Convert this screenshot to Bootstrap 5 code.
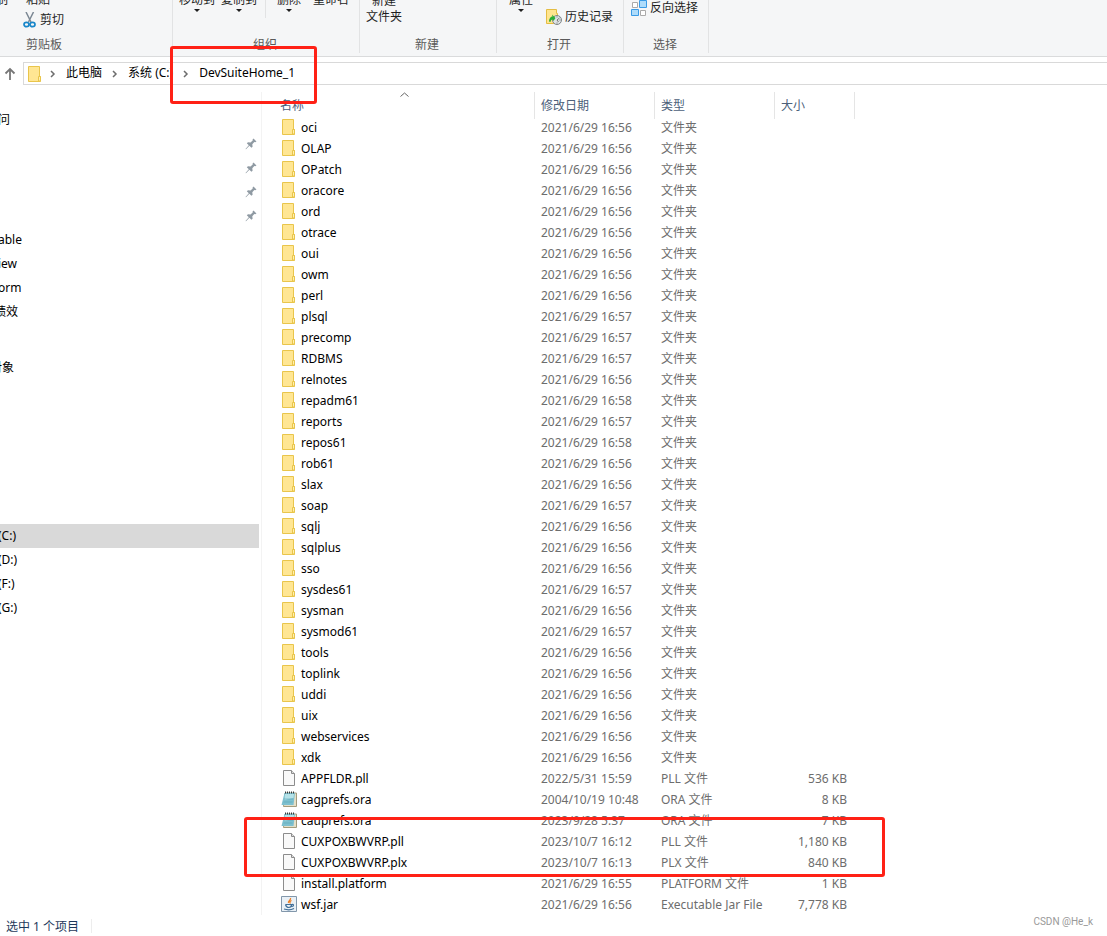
<!DOCTYPE html>
<html lang="zh-CN">
<head>
<meta charset="utf-8">
<meta name="viewport" content="width=device-width, initial-scale=1">
<title>DevSuiteHome_1</title>
<link href="https://cdn.jsdelivr.net/npm/bootstrap@5.3.0/dist/css/bootstrap.min.css" rel="stylesheet">
<style>
  body { font: 12px/16px "Noto Sans", "Noto Sans CJK SC", sans-serif; color: #000; background: #fff; overflow-x: hidden; }
  button { border: 0; background: none; padding: 0; color: #1e1e1e; white-space: nowrap; font: inherit; }
  svg { display: block; flex: none; }
  .ribbon { background: #f5f6f7; border-bottom: 1px solid #dadbdc; height: 57px; overflow: hidden; }
  .group { height: 53px; flex: none; border-right: 1px solid #e2e3e4; display: flex; flex-direction: column; justify-content: flex-end; }
  .group-body { display: flex; align-items: flex-end; height: 37px; padding-left: 6px; }
  .group-name { color: #5a5a5a; text-align: center; height: 16px; padding-right: 2px; }
  .g-clip { width: 173px; } .g-org { width: 187px; } .g-new { width: 137px; } .g-open { width: 127px; } .g-sel { width: 85px; }
  .g-clip .group-body { padding-left: 0; }
  .g-clip .group-name { padding-left: 26px; text-align: left; }
  .g-clip .plain { margin-left: -4px; }
  .clip-stack { margin: 0 0 9px 15px; gap: 4px; }
  .clip-stack > :first-child { margin-left: 3px; }
  .clip-stack span { padding-left: 3px; }
  .big { margin-bottom: 25px; }
  .big::after { content: ""; display: block; width: 6px; margin: 1px auto 0; border: 3px solid transparent; border-top-color: #1e1e1e; border-bottom: 0; }
  .plain { margin-bottom: 29px; }
  .g-org .group-body { gap: 6px; }
  .splitter { width: 1px; height: 18px; background: #e2e3e4; align-self: flex-start; margin: 0 5px 0 2px; }
  .g-org .plain { margin-left: 6px; }
  .low { margin-bottom: 12px; }
  .mid { margin-bottom: 21px; }
  .g-open .group-body { padding-left: 12px; gap: 13px; }
  .with-icon { display: flex; align-items: center; gap: 3px; }
  .up { width: 23px; padding-left: 4px; }
  .address { height: 35px; padding: 5px 0 7px; }
  .crumbs { border: 1px solid #d9d9d9; border-right: 0; padding-left: 4px; gap: 10px; }
  .crumbs > svg:first-child { margin-right: -4px; }
  .crumbs a, .tree a { color: #000; text-decoration: none; white-space: nowrap; }
  .crumbs a { margin-top: -2px; }
  .mark-box { position: absolute; border: 3px solid #ff2116; border-radius: 3px; pointer-events: none; z-index: 2; }
  .mark-path { left: 170px; top: -11px; width: 147px; height: 58px; }
  .mark-files { left: -18px; right: -30px; bottom: 38px; height: 60px; }
  .tree { width: 262px; flex: none; border-right: 1px solid #f3f3f3; padding-top: 16px; overflow: hidden; }
  .tree li { height: 24px; margin-right: 2px; padding-right: 2px; display: flex; align-items: center; }
  .tree .chosen { background: #d9d9d9; }
  .tree a { margin-left: -2px; }
  .tree .cut-half a { margin-left: -6px; }
  .tree .cut-most a { margin-left: -10px; }
  .files { width: 581px; table-layout: fixed; border-collapse: separate; border-spacing: 0; margin-left: 12px; }
  .files th { height: 25px; padding: 2px 6px 0; position: relative; font-weight: 400; color: #4c607a; vertical-align: middle; }
  .files th::after { content: ""; position: absolute; right: 0; top: 0; height: 27px; border-right: 1px solid #e5e5e5; }
  .files td { height: 21px; padding: 0 6px; color: #6d6d6d; white-space: nowrap; }
  .files td:first-child { padding-left: 7px; color: #000; }
  .files td:last-child { padding-right: 8px; text-align: right; }
  .entry { display: flex; gap: 4px; align-items: center; }
  .entry svg { margin-top: -2px; }
  .col-name { width: 261px; } .col-mid { width: 120px; } .col-size { width: 80px; }
  .sort { position: absolute; left: 126px; top: 0; }
  .status { color: #1e395b; padding: 4px 14px 0 6px; }
  .status-sep { width: 1px; height: 14px; background: #ededed; margin-left: 12px; }
  .credit { font: 10px/12px Roboto, sans-serif; color: #999; height: 16px; margin-top: -3px; }
</style>
</head>
<body>
<svg class="d-none">
  <symbol id="folder" viewBox="0 0 16 16"><path d="M1.500 .5h11v10h1v5h-12z" fill="#ffe693" stroke="#e9c54b"/><path d="M11.500 15v-4.500h2v4.500z" fill="#fff0b0" stroke="#e9c54b"/></symbol>
  <symbol id="page" viewBox="0 0 16 16"><path d="M2.500 .5h8l3 3v12h-11z" fill="#f9f9f9" stroke="#8c8c8c"/><path d="M10.500 .5v3h3" fill="#ddd" stroke="#8c8c8c"/></symbol>
  <symbol id="note" viewBox="0 0 16 16"><path d="M4 2h11.500v13.500h-13z" fill="#e4dfc8" stroke="#a39b7c"/><path d="M3.500 2h10.500l-1.500 12h-12z" fill="#7dc0cf"/><path d="M4 3h9l-.5 4-9 2z" fill="#b5e2e8"/><path d="M3 8h9M2.500 11h9" stroke="#5aa5b6" stroke-width=".6"/><path d="M4 1.500h10" stroke="#343d40" stroke-width="2" stroke-dasharray="1 1"/></symbol>
  <symbol id="jar" viewBox="0 0 16 16"><path d="M.5 .5h15v15H.5z" fill="#e9f0f6" stroke="#8297ab"/><path d="M9.500 2c1 2-3 3-2 5M10.500 4.500c-2 1-2 2-1 3" fill="none" stroke="#ed7d22" stroke-width="1.300"/><path d="M4.500 8.500h6c0 4-5 4-6 0M11 8.500c2-.5 2 2-.5 2M3 13c3 1 7 1 10-.5" fill="none" stroke="#416f98" stroke-width="1.200"/></symbol>
  <symbol id="pin" viewBox="0 0 12 12"><path d="M8.500 .5l3 3-1.300.7-.9-.1-2 2.200.3 2.500-1.200 1-2-2L1 11.300.5 11l3.300-3.800-2-1.900L3 4.200l2.500.3 2.200-2-.1-1z" fill="#8f9aa3"/></symbol>
  <symbol id="step" viewBox="0 0 6 8"><path d="M1 1l3 3-3 3" fill="none" stroke="#6d6d6d" stroke-width="1.500"/></symbol>
</svg>

<header class="ribbon d-flex">
  <section class="group g-clip">
    <div class="group-body">
      <button class="plain">制</button>
      <div class="clip-stack d-flex flex-column align-items-start">
        <button>粘贴</button>
        <button class="d-flex align-items-center">
          <svg width="14" height="16" viewBox="0 0 14 16"><path d="M3 0l5 10M10.500 0L5.500 10" stroke="#7b8894" stroke-width="1.500"/><ellipse cx="3.500" cy="12.500" rx="2.500" ry="2.200" fill="none" stroke="#1886c9" stroke-width="1.700"/><ellipse cx="9.500" cy="12.500" rx="2.500" ry="2.200" fill="none" stroke="#1886c9" stroke-width="1.700"/></svg>
          <span>剪切</span></button>
      </div>
    </div>
    <div class="group-name">剪贴板</div>
  </section>
  <section class="group g-org">
    <div class="group-body">
      <button class="big">移动到</button>
      <button class="big">复制到</button>
      <div class="splitter"></div>
      <button class="big">删除</button>
      <button class="plain">重命名</button>
    </div>
    <div class="group-name">组织</div>
  </section>
  <section class="group g-new">
    <div class="group-body">
      <button class="low">新建<br>文件夹</button>
    </div>
    <div class="group-name">新建</div>
  </section>
  <section class="group g-open">
    <div class="group-body">
      <button class="big">属性</button>
      <button class="low with-icon">
        <svg width="16" height="16" viewBox="0 0 16 16"><path d="M.5 .5h10v4h1v10H.5z" fill="#ffe58f" stroke="#e4bd43"/><circle cx="11" cy="11" r="4.500" fill="#dfe4e6" stroke="#7f8588"/><path d="M11 11l2.500-2M11 11l1.500 2M11 7.500v1M14.500 11h-1M11 14.500v-1" fill="none" stroke="#555" stroke-width=".8"/><path d="M3 12.500c0-3 1.500-5 3.500-5L6 5.500 9.500 9 7.500 12l-.8-1.500c-1.500 0-2 1-2.200 2.500z" fill="#2cae36"/></svg>
        <span>历史记录</span></button>
    </div>
    <div class="group-name">打开</div>
  </section>
  <section class="group g-sel">
    <div class="group-body">
      <button class="mid with-icon">
        <svg width="17" height="16" viewBox="0 0 17 16"><path d="M2.500 2.500h5v5h-5zM10.500 10.500h5v5h-5z" fill="#fff" stroke="#aaa"/><path d="M9.500 .5h7v7h-7zM1.500 9.500h7v6h-7z" fill="#aedcfb" stroke="#3a9be6"/></svg>
        <span>反向选择</span></button>
    </div>
    <div class="group-name">选择</div>
  </section>
</header>

<nav class="address d-flex position-relative" aria-label="路径">
  <button class="up d-flex align-items-center" aria-label="向上">
    <svg width="12" height="14" viewBox="0 0 12 14"><path d="M6 13V2M1.500 6.500L6 2l4.500 4.500" fill="none" stroke="#777" stroke-width="1.800"/></svg></button>
  <div class="crumbs d-flex align-items-center flex-grow-1">
    <svg width="16" height="16"><use href="#folder" x="-1"/></svg>
    <svg width="6" height="8"><use href="#step"/></svg>
    <a href="#">此电脑</a>
    <svg width="6" height="8"><use href="#step"/></svg>
    <a href="#">系统 (C:)</a>
    <svg width="6" height="8"><use href="#step"/></svg>
    <a href="#">DevSuiteHome_1</a>
  </div>
  <div class="mark-box mark-path"></div>
</nav>

<main class="d-flex">
  <ul class="tree list-unstyled mb-0">
    <li><a href="#">问</a></li>
    <li class="justify-content-end"><svg width="12" height="12"><use href="#pin"/></svg></li>
    <li class="justify-content-end"><svg width="12" height="12"><use href="#pin"/></svg></li>
    <li class="justify-content-end"><svg width="12" height="12"><use href="#pin"/></svg></li>
    <li class="justify-content-end"><svg width="12" height="12"><use href="#pin"/></svg></li>
    <li><a href="#">able</a></li>
    <li><a href="#">iew</a></li>
    <li><a href="#">orm</a></li>
    <li class="cut-half"><a href="#">绩效</a></li>
    <li class="mt-2"></li>
    <li class="cut-most"><a href="#">对象</a></li>
    <li></li><li></li><li></li><li></li><li></li><li></li>
    <li class="chosen"><a href="#">(C:)</a></li>
    <li><a href="#">(D:)</a></li>
    <li><a href="#">(F:)</a></li>
    <li><a href="#">(G:)</a></li>
  </ul>
  <div class="position-relative">
    <table class="files">
      <colgroup><col class="col-name"><col class="col-mid"><col class="col-mid"><col class="col-size"></colgroup>
      <thead><tr>
        <th>名称<svg class="sort" width="9" height="6" viewBox="0 0 9 6"><path d="M.5 4.500l4-3.500 4 3.500" fill="none" stroke="#666"/></svg></th>
        <th>修改日期</th><th>类型</th><th>大小</th>
      </tr></thead>
      <tbody id="rows"></tbody>
    </table>
    <div class="mark-box mark-files"></div>
  </div>
</main>

<footer class="status d-flex">
  <span>选中 1 个项目</span><span class="status-sep"></span>
  <span class="credit ms-auto">CSDN @He_k</span>
</footer>

<script>
  // Folders: name and minute of 2021/6/29 16:xx
  const folders = 'oci 56,OLAP 56,OPatch 56,oracore 56,ord 56,otrace 56,oui 56,owm 56,perl 56,plsql 57,precomp 57,RDBMS 57,relnotes 56,repadm61 58,reports 57,repos61 58,rob61 56,slax 56,soap 57,sqlj 56,sqlplus 56,sso 56,sysdes61 57,sysman 56,sysmod61 57,tools 56,toplink 56,uddi 56,uix 56,webservices 56,xdk 56'
    .split(',').map(f => { const [n, m] = f.split(' '); return ['folder', n, '2021/6/29 16:' + m, '文件夹', '']; });
  const files = [
    ['page', 'APPFLDR.pll', '2022/5/31 15:59', 'PLL 文件', '536 KB'],
    ['note', 'cagprefs.ora', '2004/10/19 10:48', 'ORA 文件', '8 KB'],
    ['note', 'cauprefs.ora', '2023/9/28 5:37', 'ORA 文件', '7 KB'],
    ['page', 'CUXPOXBWVRP.pll', '2023/10/7 16:12', 'PLL 文件', '1,180 KB'],
    ['page', 'CUXPOXBWVRP.plx', '2023/10/7 16:13', 'PLX 文件', '840 KB'],
    ['page', 'install.platform', '2021/6/29 16:55', 'PLATFORM 文件', '1 KB'],
    ['jar', 'wsf.jar', '2021/6/29 16:56', 'Executable Jar File', '7,778 KB']
  ];
  document.getElementById('rows').innerHTML = folders.concat(files).map(([icon, name, date, type, size]) =>
    `<tr><td><div class="entry"><svg width="16" height="16"><use href="#${icon}"/></svg><span>${name}</span></div></td><td>${date}</td><td>${type}</td><td>${size}</td></tr>`).join('');
</script>
<script src="https://cdn.jsdelivr.net/npm/bootstrap@5.3.0/dist/js/bootstrap.bundle.min.js"></script>
</body>
</html>
